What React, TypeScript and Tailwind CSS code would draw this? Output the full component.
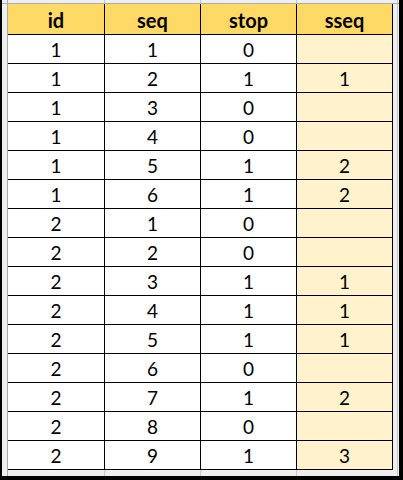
const rows: [number, number, number, number | null][] = [
  [1, 1, 0, null],
  [1, 2, 1, 1],
  [1, 3, 0, null],
  [1, 4, 0, null],
  [1, 5, 1, 2],
  [1, 6, 1, 2],
  [2, 1, 0, null],
  [2, 2, 0, null],
  [2, 3, 1, 1],
  [2, 4, 1, 1],
  [2, 5, 1, 1],
  [2, 6, 0, null],
  [2, 7, 1, 2],
  [2, 8, 0, null],
  [2, 9, 1, 3],
];

function GridStrip({ h }: { h: string }) {
  // spreadsheet gridlines around the table
  return (
    <div className={`flex ${h}`}>
      <div className="w-[6px] shrink-0 border-r border-[#ababab]" />
      <div className="w-[97px] shrink-0 border-r border-[#c8c8c8]" />
      <div className="w-[96px] shrink-0 border-r border-[#c8c8c8]" />
      <div className="w-[96px] shrink-0 border-r border-[#c8c8c8]" />
      <div className="w-[96px] shrink-0" />
      <div className="w-[5px] shrink-0 border-r border-[#c8c8c8]" />
    </div>
  );
}

export default function App() {
  return (
    <div className="w-[403px] h-[480px] bg-black pl-[2px] pr-[4px] pb-[4px] font-['Lato','Liberation_Sans',sans-serif] text-[19px] text-black">
      <div className="h-full bg-[#efefef] flex flex-col">
        <div className="h-[4px] border-b border-[#ababab]">
          <GridStrip h="h-[3px]" />
        </div>
        <div className="flex">
          <div className="w-[6px] shrink-0 border-r border-[#ababab]" />
          <div className="w-[385px] shrink-0 border-r border-black">
            {/* Header */}
            <div className="flex h-[31px] bg-[#ffd966] border-b border-black font-bold text-[20px]">
              <div className="w-[97px] shrink-0 border-r border-black flex items-center justify-center pt-[2px]">id</div>
              <div className="w-[96px] shrink-0 border-r border-black flex items-center justify-center pt-[2px]">seq</div>
              <div className="w-[96px] shrink-0 border-r border-black flex items-center justify-center pt-[2px]">stop</div>
              <div className="w-[95px] shrink-0 flex items-center justify-center pt-[2px]">sseq</div>
            </div>
            {rows.map((r, ri) => (
              <div key={ri} className="flex h-[29px] border-b border-black">
                <div className="w-[97px] shrink-0 bg-white border-r border-black flex items-center justify-center pt-[3px]">{r[0]}</div>
                <div className="w-[96px] shrink-0 bg-white border-r border-black flex items-center justify-center pt-[3px]">{r[1]}</div>
                <div className="w-[96px] shrink-0 bg-white border-r border-black flex items-center justify-center pt-[3px]">{r[2]}</div>
                <div className="w-[95px] shrink-0 bg-[#fff2cc] flex items-center justify-center pt-[3px]">{r[3] ?? ""}</div>
              </div>
            ))}
          </div>
          <div className="w-[5px] shrink-0 border-r border-[#c8c8c8]" />
        </div>
        <GridStrip h="flex-1" />
      </div>
    </div>
  );
}
